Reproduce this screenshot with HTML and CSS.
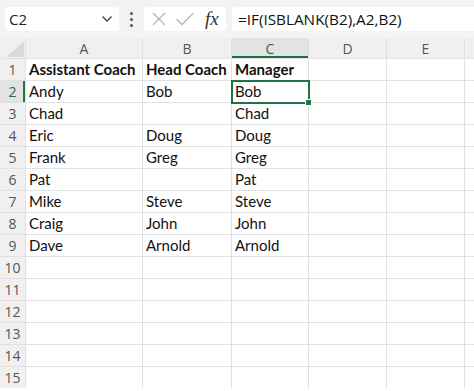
FILE: index.html
```html
<!DOCTYPE html>
<html>
<head>
    <meta charset="UTF-8">
    <title>Sheet</title>
    <link rel="stylesheet" href="styles.css">
</head>
<body>
    <div class="toolbar">
        <div class="name-box">
            <span>C2</span>
            <svg class="chevron" width="12" height="8" viewBox="0 0 12 8"><path d="M1.5 1.5 L6 6 L10.5 1.5" fill="none" stroke="#444" stroke-width="1.4"/></svg>
        </div>
        <div class="dots"><i></i><i></i><i></i></div>
        <div class="fx-box">
            <svg width="16" height="16" viewBox="0 0 16 16"><path d="M2 2 L14 14 M14 2 L2 14" stroke="#b5b5b5" stroke-width="1.3"/></svg>
            <svg width="20" height="16" viewBox="0 0 20 16"><path d="M1.5 8 L7 13.5 L18.5 2" fill="none" stroke="#b5b5b5" stroke-width="1.3"/></svg>
            <span class="fx">fx</span>
        </div>
        <div class="formula">=IF(ISBLANK(B2),A2,B2)</div>
    </div>

    <div class="sheet">
        <div class="corner"><svg width="18" height="16" viewBox="0 0 18 16"><path d="M18 0 L18 16 L0 16 Z" fill="#dadada"/></svg></div>
        <div class="col">A</div>
        <div class="col">B</div>
        <div class="col active">C</div>
        <div class="col">D</div>
        <div class="col">E</div>
        <div class="col"></div>

        <div class="row">1</div>
        <div class="cell bold">Assistant Coach</div><div class="cell bold">Head Coach</div><div class="cell bold">Manager</div><div class="cell"></div><div class="cell"></div><div class="cell"></div>

        <div class="row active">2</div>
        <div class="cell">Andy</div><div class="cell">Bob</div><div class="cell selected">Bob</div><div class="cell"></div><div class="cell"></div><div class="cell"></div>

        <div class="row">3</div>
        <div class="cell">Chad</div><div class="cell"></div><div class="cell">Chad</div><div class="cell"></div><div class="cell"></div><div class="cell"></div>

        <div class="row">4</div>
        <div class="cell">Eric</div><div class="cell">Doug</div><div class="cell">Doug</div><div class="cell"></div><div class="cell"></div><div class="cell"></div>

        <div class="row">5</div>
        <div class="cell">Frank</div><div class="cell">Greg</div><div class="cell">Greg</div><div class="cell"></div><div class="cell"></div><div class="cell"></div>

        <div class="row">6</div>
        <div class="cell">Pat</div><div class="cell"></div><div class="cell">Pat</div><div class="cell"></div><div class="cell"></div><div class="cell"></div>

        <div class="row">7</div>
        <div class="cell">Mike</div><div class="cell">Steve</div><div class="cell">Steve</div><div class="cell"></div><div class="cell"></div><div class="cell"></div>

        <div class="row">8</div>
        <div class="cell">Craig</div><div class="cell">John</div><div class="cell">John</div><div class="cell"></div><div class="cell"></div><div class="cell"></div>

        <div class="row">9</div>
        <div class="cell">Dave</div><div class="cell">Arnold</div><div class="cell">Arnold</div><div class="cell"></div><div class="cell"></div><div class="cell"></div>

        <div class="row">10</div>
        <div class="cell"></div><div class="cell"></div><div class="cell"></div><div class="cell"></div><div class="cell"></div><div class="cell"></div>

        <div class="row">11</div>
        <div class="cell"></div><div class="cell"></div><div class="cell"></div><div class="cell"></div><div class="cell"></div><div class="cell"></div>

        <div class="row">12</div>
        <div class="cell"></div><div class="cell"></div><div class="cell"></div><div class="cell"></div><div class="cell"></div><div class="cell"></div>

        <div class="row">13</div>
        <div class="cell"></div><div class="cell"></div><div class="cell"></div><div class="cell"></div><div class="cell"></div><div class="cell"></div>

        <div class="row">14</div>
        <div class="cell"></div><div class="cell"></div><div class="cell"></div><div class="cell"></div><div class="cell"></div><div class="cell"></div>

        <div class="row">15</div>
        <div class="cell"></div><div class="cell"></div><div class="cell"></div><div class="cell"></div><div class="cell"></div><div class="cell"></div>
    </div>
</body>
</html>
```

FILE: styles.css
```css
body {
    margin: 0;
    padding: 0;
    width: 474px;
    height: 391px;
    overflow: hidden;
    background: #fff;
    font-family: 'Open Sans', sans-serif;
}
.toolbar {
    height: 38px;
    background: #f3f3f3;
    display: flex;
    align-items: center;
    padding-left: 5px;
    box-sizing: border-box;
}
.name-box {
    width: 114px;
    height: 24px;
    background: #fff;
    border-radius: 4px;
    display: flex;
    align-items: center;
    justify-content: space-between;
    padding: 0 6px 0 4px;
    box-sizing: border-box;
    font-size: 15px;
    color: #222;
}
.dots {
    width: 25px;
    display: flex;
    flex-direction: column;
    align-items: center;
    gap: 3px;
}
.dots i {
    width: 3px;
    height: 3px;
    border-radius: 50%;
    background: #555;
}
.fx-box {
    width: 82px;
    height: 24px;
    background: #fff;
    border-radius: 4px;
    display: flex;
    align-items: center;
    gap: 8px;
    padding-left: 7px;
    box-sizing: border-box;
}
.fx {
    font-family: 'Liberation Serif', serif;
    font-style: italic;
    font-size: 19px;
    color: #333;
    margin-left: 2px;
}
.formula {
    flex: 1;
    margin-left: 6px;
    height: 24px;
    background: #fff;
    border-radius: 4px 0 0 4px;
    font-size: 15.3px;
    line-height: 24px;
    padding-left: 6px;
    color: #111;
}
.sheet {
    display: grid;
    grid-template-columns: 25px 116px 88px 76px 77px 77px 1fr;
    grid-template-rows: 20px repeat(15, 21px);
    gap: 1px;
    background: #e1e1e1;
}
.corner, .col, .row {
    background: #f0f0f0;
    color: #555;
    font-size: 14px;
}
.corner {
    display: flex;
    align-items: flex-end;
    justify-content: flex-end;
    padding: 0 1px 1px 0;
}
.col {
    display: flex;
    align-items: center;
    justify-content: center;
}
.col.active {
    background: #e3e3e3;
    color: #2c6b47;
    box-shadow: inset 0 -2px 0 #217346;
}
.row {
    display: flex;
    align-items: center;
    justify-content: center;
    font-size: 14px;
}
.row.active {
    background: #e3e3e3;
    color: #2c6b47;
    box-shadow: inset -2px 0 0 #217346;
}
.cell {
    background: #fff;
    font-family: 'Lato', sans-serif;
    font-size: 15px;
    color: #111;
    padding: 0 0 2px 3px;
    display: flex;
    align-items: flex-end;
    white-space: nowrap;
}
.cell.bold {
    font-weight: 700;
}
.selected {
    position: relative;
}
.selected::after {
    content: "";
    position: absolute;
    left: -1px;
    top: -1px;
    right: -2px;
    bottom: -2px;
    border: 2px solid #217346;
}
.selected::before {
    content: "";
    position: absolute;
    right: -4px;
    bottom: -4px;
    width: 5px;
    height: 5px;
    background: #217346;
    border: 1px solid #fff;
    z-index: 1;
}
```
